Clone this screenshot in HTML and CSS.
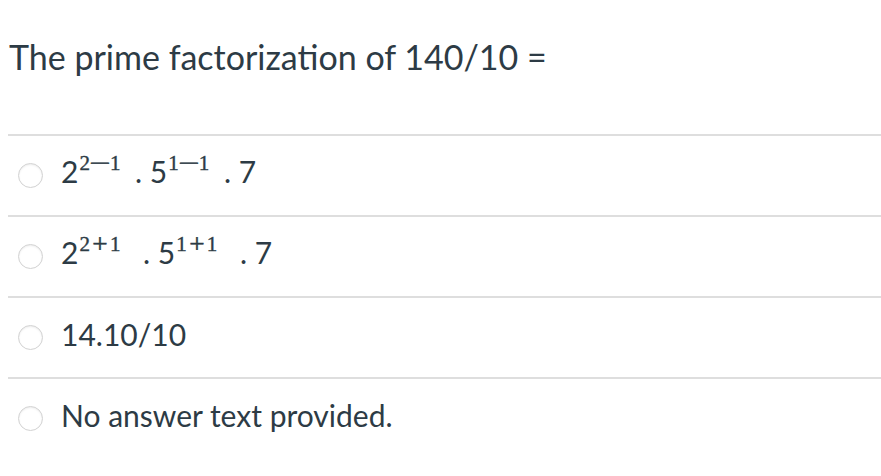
FILE: index.html
```html
<!DOCTYPE html>
<html lang="en">
<head>
<meta charset="utf-8">
<link rel="stylesheet" href="styles.css">
</head>
<body>
<div class="question">
  <div class="question-text">The prime factorization of 140/10 =</div>
  <div class="answers">
    <label class="answer">
      <span class="radio"></span>
      <span class="answer-text">2<sup class="math">2<span class="op minus">−</span>1</sup> . 5<sup class="math">1<span class="op minus">−</span>1</sup> . 7</span>
    </label>
    <label class="answer">
      <span class="radio"></span>
      <span class="answer-text">2<sup class="math">2<span class="op plus">+</span>1</sup><span class="gap"></span> . 5<sup class="math">1<span class="op plus">+</span>1</sup><span class="gap"></span> . 7</span>
    </label>
    <label class="answer">
      <span class="radio"></span>
      <span class="answer-text">14.10/10</span>
    </label>
    <label class="answer">
      <span class="radio"></span>
      <span class="answer-text">No answer text provided.</span>
    </label>
  </div>
</div>
</body>
</html>
```

FILE: styles.css
```css
html, body {
  margin: 0;
  padding: 0;
  background: #ffffff;
}

body {
  font-family: "Lato", "Liberation Sans", sans-serif;
  color: #2d3b45;
}

.question {
  margin-left: 8px;
}

.question-text {
  height: 134px;
  display: flex;
  align-items: center;
  padding-left: 1px;
  padding-bottom: 22px;
  box-sizing: border-box;
  font-size: 34px;
}

.answers {
  display: flex;
  flex-direction: column;
}

.answer {
  display: flex;
  align-items: center;
  gap: 18px;
  height: 81px;
  border-top: 2px solid #dedede;
  box-sizing: border-box;
  padding-left: 10px;
  font-size: 30px;
}

.radio {
  width: 23px;
  height: 23px;
  border: 1.5px solid #d2d2d2;
  border-radius: 50%;
  box-shadow: inset 0 1px 2px rgba(0, 0, 0, 0.08);
  background: #fff;
  flex: none;
}

.answer-text {
  line-height: 1;
  padding-bottom: 8px;
}

.math {
  font-family: "Liberation Serif", "DejaVu Serif", serif;
  font-size: 21px;
  vertical-align: 0;
  position: relative;
  top: -13px;
  margin-left: 1px;
  margin-right: 7px;
  -webkit-text-stroke: 0.4px #2d3b45;
}

.op {
  display: inline-block;
  width: 20px;
  text-align: center;
}

.minus {
  transform: scaleX(1.8);
}

.plus {
  transform: scale(1.3);
}

.gap {
  display: inline-block;
  width: 8px;
}
```
